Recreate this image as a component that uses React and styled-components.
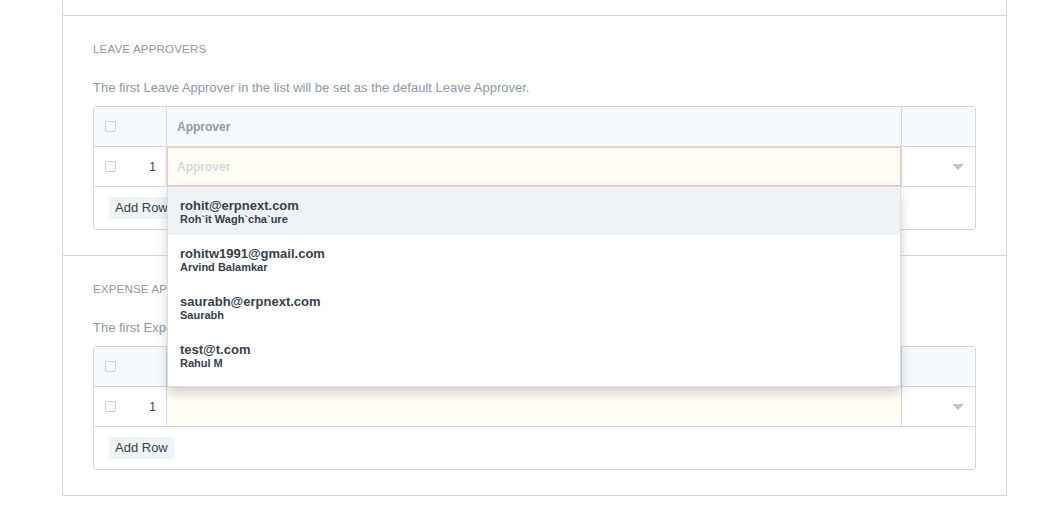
import React from "react";
import styled, { createGlobalStyle } from "styled-components";

const GlobalStyle = createGlobalStyle`
  html, body {
    margin: 0;
    padding: 0;
    background: #fff;
    font-family: "Liberation Sans", Arial, sans-serif;
    color: #36414c;
  }
  * { box-sizing: border-box; }
`;

const approvers = [
  { email: "rohit@erpnext.com", name: "Roh`it Wagh`cha`ure", active: true },
  { email: "rohitw1991@gmail.com", name: "Arvind Balamkar" },
  { email: "saurabh@erpnext.com", name: "Saurabh" },
  { email: "test@t.com", name: "Rahul M" },
];

const Page = styled.div`
  padding: 0 45px 15px 62px;
  width: 1052px;
`;

const Panel = styled.div`
  border: 1px solid #d1d8dd;
  border-top: none;
  width: 945px;
`;

const Section = styled.div`
  padding: ${(p) => (p.$empty ? "0" : "26px 30px 25px")};
  height: ${(p) => (p.$empty ? "16px" : "auto")};
  border-bottom: ${(p) => (p.$last ? "none" : "1px solid #d1d8dd")};
`;

const Heading = styled.h6`
  margin: 0 0 24px;
  font-size: 11.5px;
  font-weight: normal;
  letter-spacing: 0.2px;
  text-transform: uppercase;
  color: #8d99a6;
  line-height: 14px;
`;

const Description = styled.p`
  margin: 0 0 10px;
  font-size: 13px;
  color: #8d99a6;
  line-height: 16px;
`;

const Grid = styled.div`
  border: 1px solid #d1d8dd;
  border-radius: 3px;
`;

const Row = styled.div`
  display: grid;
  grid-template-columns: 72px 1fr 73px;
  height: 40px;
  background: ${(p) => (p.$head ? "#f7fafc" : "#fff")};
  border-bottom: 1px solid #d1d8dd;
`;

const IndexCell = styled.div`
  display: flex;
  align-items: center;
  justify-content: space-between;
  padding: 0 10px 0 11px;
  font-size: 12px;
  color: #36414c;
`;

const Check = styled.span`
  width: 11px;
  height: 11px;
  border: 1px solid #c8d0d6;
  border-radius: 2px;
  background: #fff;
  display: inline-block;
`;

const FieldCell = styled.div`
  position: relative;
  border-left: 1px solid #d1d8dd;
  border-right: 1px solid #d1d8dd;
  display: flex;
  align-items: center;
  padding: 0 10px;
  font-size: 12px;
  font-weight: bold;
  color: ${(p) => (p.$placeholder ? "#d1d8dd" : "#8d99a6")};
  background: ${(p) => (p.$input ? "#fffdf4" : "transparent")};
  box-shadow: ${(p) => (p.$required ? "inset 0 0 0 1px #f6c4c4, 0 0 3px #fbdede" : "none")};
`;

const CaretCell = styled.div`
  display: flex;
  align-items: center;
  justify-content: flex-end;
  padding-right: 11px;
`;

const Caret = styled.span`
  width: 0;
  height: 0;
  border-left: 6px solid transparent;
  border-right: 6px solid transparent;
  border-top: 6px solid #c0c6cc;
`;

const Footer = styled.div`
  padding: 10px 15px 10px;
`;

const AddRow = styled.button`
  font-family: inherit;
  font-size: 13px;
  color: #36414c;
  background: #f0f4f7;
  border: none;
  border-radius: 3px;
  padding: 3px 6px;
  line-height: 16px;
`;

const Dropdown = styled.ul`
  position: absolute;
  top: 100%;
  left: 0;
  right: 0;
  margin: 1px 0 0;
  padding: 0 0 7px;
  list-style: none;
  background: #fff;
  border: 1px solid #d8dde1;
  border-top: none;
  border-radius: 0 0 3px 3px;
  box-shadow: 0 6px 12px rgba(0, 0, 0, 0.18);
  z-index: 10;
`;

const Option = styled.li`
  height: 48px;
  padding: 11px 12px 0;
  background: ${(p) => (p.$active ? "#eef3f6" : "#fff")};
`;

const Email = styled.div`
  font-size: 13px;
  font-weight: bold;
  color: #36414c;
  line-height: 15px;
`;

const Name = styled.div`
  font-size: 11px;
  font-weight: bold;
  color: #36414c;
  line-height: 12px;
`;

const ApproverTable = ({ open }) => (
  <Grid>
    <Row $head>
      <IndexCell>
        <Check />
      </IndexCell>
      <FieldCell>{open ? "Approver" : ""}</FieldCell>
      <div />
    </Row>
    <Row>
      <IndexCell>
        <Check />
        <span>1</span>
      </IndexCell>
      <FieldCell $input $required={open} $placeholder>
        {open ? "Approver" : ""}
        {open && (
          <Dropdown>
            {approvers.map((a) => (
              <Option key={a.email} $active={a.active}>
                <Email>{a.email}</Email>
                <Name>{a.name}</Name>
              </Option>
            ))}
          </Dropdown>
        )}
      </FieldCell>
      <CaretCell>
        <Caret />
      </CaretCell>
    </Row>
    <Footer>
      <AddRow>Add Row</AddRow>
    </Footer>
  </Grid>
);

export default function App() {
  return (
    <Page>
      <GlobalStyle />
      <Panel>
        <Section $empty />
        <Section>
          <Heading>Leave Approvers</Heading>
          <Description>
            The first Leave Approver in the list will be set as the default Leave Approver.
          </Description>
          <ApproverTable open />
        </Section>
        <Section $last>
          <Heading>Expense Approvers</Heading>
          <Description>
            The first Expense Approver in the list will be set as the default Expense Approver.
          </Description>
          <ApproverTable />
        </Section>
      </Panel>
    </Page>
  );
}
